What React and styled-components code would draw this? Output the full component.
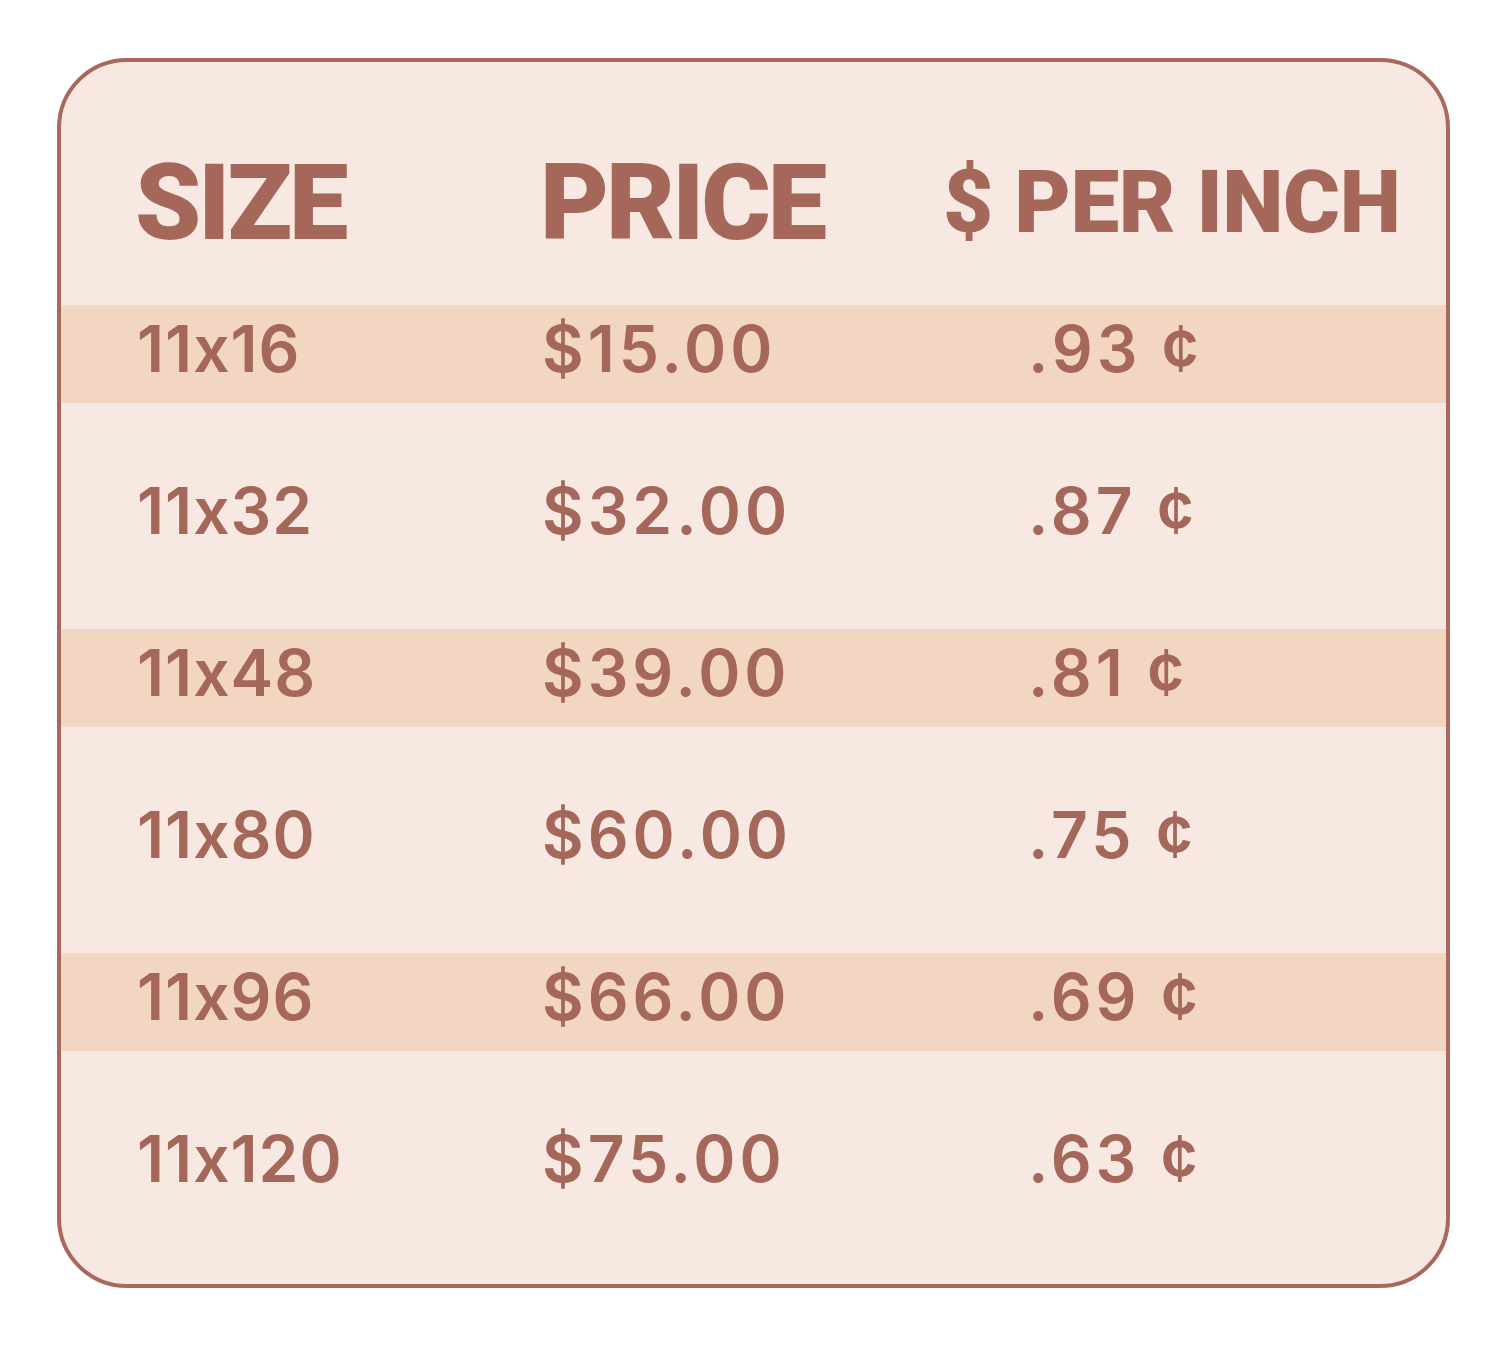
import React from 'react';
import styled, { createGlobalStyle } from 'styled-components';

const GlobalStyle = createGlobalStyle`
  html, body {
    margin: 0;
    padding: 0;
    background: #ffffff;
  }
`;

const rows = [
  { size: '11x16', price: '$15.00', perInch: '.93 ¢' },
  { size: '11x32', price: '$32.00', perInch: '.87 ¢' },
  { size: '11x48', price: '$39.00', perInch: '.81 ¢' },
  { size: '11x80', price: '$60.00', perInch: '.75 ¢' },
  { size: '11x96', price: '$66.00', perInch: '.69 ¢' },
  { size: '11x120', price: '$75.00', perInch: '.63 ¢' },
];

const App = () => (
  <Page>
    <GlobalStyle />
    <Card>
      <Header>
        <HeadCell>SIZE</HeadCell>
        <HeadCell>PRICE</HeadCell>
        <HeadCell small>$ PER INCH</HeadCell>
      </Header>
      {rows.map((row, id) => (
        <Row key={id}>
          <Band striped={id % 2 === 0}>
            <Cell tight>{row.size}</Cell>
            <Cell>{row.price}</Cell>
            <Cell indent>{row.perInch}</Cell>
          </Band>
        </Row>
      ))}
    </Card>
  </Page>
);

export default App;

const Page = styled.div`
  width: 1500px;
  height: 1347px;
  box-sizing: border-box;
  padding: 58px 50px 0 57px;
`;

const Card = styled.div`
  width: 1393px;
  height: 1230px;
  box-sizing: border-box;
  border: 4px solid #a8695c;
  border-radius: 70px;
  background: #f7e9e1;
  display: flex;
  flex-direction: column;
`;

const Header = styled.div`
  height: 211px;
  display: grid;
  grid-template-columns: 405px 409px 1fr;
  align-items: center;
  padding: 0 0 0 74px;
  box-sizing: border-box;
`;

const HeadCell = styled.div`
  font-family: Roboto, "Noto Sans", sans-serif;
  font-weight: 900;
  font-size: ${(p) => (p.small ? '87px' : '106px')};
  line-height: 1;
  color: #a5675a;
  letter-spacing: ${(p) => (p.small ? '-0.4px' : '-3px')};
  white-space: nowrap;
  padding-top: 70px;
  margin-left: ${(p) => (p.small ? '-6px' : '0')};
`;

const Row = styled.div`
  height: 162px;
  display: flex;
  align-items: center;
`;

const Band = styled.div`
  width: 100%;
  height: 98px;
  background: ${(p) => (p.striped ? '#f2d6c1' : 'transparent')};
  display: grid;
  grid-template-columns: 405px 409px 1fr;
  align-items: center;
  padding: 0 0 10px 76px;
  box-sizing: border-box;
`;

const Cell = styled.div`
  font-family: Inter, "Noto Sans", sans-serif;
  font-weight: 600;
  font-size: 64px;
  line-height: 1;
  letter-spacing: ${(p) => (p.tight ? '1px' : '4px')};
  color: #a5675a;
  white-space: nowrap;
  padding-left: ${(p) => (p.indent ? '77px' : '0')};
`;
